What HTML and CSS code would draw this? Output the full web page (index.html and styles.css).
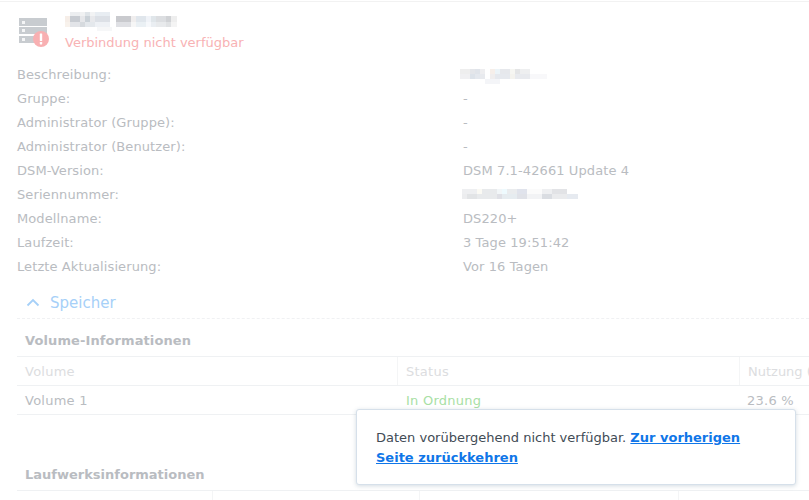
FILE: index.html
```html
<!DOCTYPE html>
<html lang="de">
<head>
    <meta charset="UTF-8">
    <title>Server</title>
    <link rel="stylesheet" href="styles.css">
</head>
<body>
    <div class="page">
        <div class="head">
            <svg class="server-icon" width="32" height="34" viewBox="0 0 32 34">
                <path fill="#c8ccd0" d="M0 0h28v8H0zM0 9h28v7H0zM0 18h28v7H0z"/>
                <rect x="3" y="3" width="3" height="3" fill="#f4f5f6"/>
                <rect x="3" y="11" width="3" height="3" fill="#f4f5f6"/>
                <rect x="3" y="20" width="3" height="3" fill="#f4f5f6"/>
                <circle cx="22" cy="21" r="8" fill="#f8b0b2"/>
                <rect x="20.8" y="15.5" width="2.4" height="7.5" rx="0.6" fill="#fff"/>
                <rect x="20.8" y="24" width="2.4" height="2.4" rx="0.6" fill="#fff"/>
            </svg>
            <div>
                <div class="mosaic name-mosaic"></div>
                <div class="conn-error">Verbindung nicht verfügbar</div>
            </div>
        </div>

        <div class="info-row"><span class="info-label">Beschreibung:</span><span class="mosaic desc-mosaic"></span></div>
        <div class="info-row"><span class="info-label">Gruppe:</span><span>-</span></div>
        <div class="info-row"><span class="info-label">Administrator (Gruppe):</span><span>-</span></div>
        <div class="info-row"><span class="info-label">Administrator (Benutzer):</span><span>-</span></div>
        <div class="info-row"><span class="info-label">DSM-Version:</span><span>DSM 7.1-42661 Update 4</span></div>
        <div class="info-row"><span class="info-label">Seriennummer:</span><span class="mosaic serial-mosaic"></span></div>
        <div class="info-row"><span class="info-label">Modellname:</span><span>DS220+</span></div>
        <div class="info-row"><span class="info-label">Laufzeit:</span><span>3 Tage 19:51:42</span></div>
        <div class="info-row"><span class="info-label">Letzte Aktualisierung:</span><span>Vor 16 Tagen</span></div>

        <div class="section-title">
            <svg width="14" height="9" viewBox="0 0 14 9"><path d="M1.5 7.5 7 2l5.5 5.5" fill="none" stroke="#a6d0f8" stroke-width="1.8"/></svg>
            <span>Speicher</span>
        </div>

        <h3 class="sub-title">Volume-Informationen</h3>
        <div class="table-row table-head volume-cols">
            <div class="cell">Volume</div>
            <div class="cell">Status</div>
            <div class="cell usage-head">Nutzung (</div>
        </div>
        <div class="table-row table-body volume-cols">
            <div class="cell">Volume 1</div>
            <div class="cell status-ok">In Ordnung</div>
            <div class="cell">23.6 %</div>
        </div>

        <h3 class="sub-title drive-title">Laufwerksinformationen</h3>
        <div class="table-row table-head drive-cols">
            <div class="cell"></div>
            <div class="cell"></div>
            <div class="cell"></div>
            <div class="cell"></div>
        </div>
    </div>

    <div class="toast">
        Daten vorübergehend nicht verfügbar. <a href="#">Zur vorherigen Seite zurückkehren</a>
    </div>
</body>
</html>
```

FILE: styles.css
```css
html, body {
    height: 100%;
}
body {
    margin: 0;
    overflow: hidden;
    background-color: #fff;
    color: #b9bcc1;
    font-family: "DejaVu Sans", Verdana, sans-serif;
    font-size: 13px;
}
.page {
    border-top: 1px solid #f2f2f2;
    margin-top: 1px;
    padding: 0 0 0 17px;
    width: 792px;
}
.head {
    display: flex;
    gap: 14px;
    height: 61px;
    padding: 10px 0 0 2px;
    box-sizing: border-box;
}
.server-icon {
    margin-top: 6px;
}
.mosaic {
    display: block;
    background-repeat: no-repeat;
}
.name-mosaic {
    width: 112px;
    height: 19px;
    background-image:
        linear-gradient(90deg, #fff 0 5px, #eceef0 5px 15px, #f0f1f2 15px 20px, #dfe4e8 20px 25px, #f2f3f4 25px 30px, #e8edf2 30px 45px, #fff 45px),
        linear-gradient(90deg, #f6eee8 0 5px, #c8ccd2 5px 15px, #e6e7ea 15px 20px, #cad1d7 20px 25px, #e8e9ec 25px 30px, #dce0e6 30px 45px, #fff 45px 51px, #c9cace 51px 66px, #f0eeee 66px 71px, #e0e6ec 71px 81px, #f0f3f8 81px 86px, #e0e6ea 86px 91px, #dcdee1 91px 101px, #d0d2d5 101px 106px, #eeeeee 106px 111px),
        linear-gradient(90deg, #f8f2ec 0 5px, #e2e4e8 5px 15px, #d6dade 15px 20px, #e4e8ec 20px 30px, #eef1f5 30px 45px, #fff 45px 51px, #dfe0e4 51px 66px, #f6f6f6 66px 71px, #eaf0f4 71px 81px, #f6f8fb 81px 86px, #eaeef2 86px 91px, #e8eaec 91px 101px, #e0e2e4 101px 106px, #f4f4f4 106px 111px),
        linear-gradient(90deg, #fff 0 32px, #f6f7f8 32px 47px, #fff 47px);
    background-size: 100% 4px, 100% 6px, 100% 5px, 100% 4px;
    background-position: 0 0, 0 4px, 0 10px, 0 15px;
}
.conn-error {
    margin-top: 4px;
    color: #f8b2b4;
}
.info-row {
    display: flex;
    height: 24px;
    line-height: 24px;
    letter-spacing: 0.1px;
}
.info-label {
    width: 446px;
}
.desc-mosaic {
    width: 87px;
    height: 15px;
    margin: 6px 0 0 -3px;
    background-image:
        linear-gradient(90deg, #eeeeee 0 10px, #e4e6ea 10px 15px, #e0e4ea 15px 20px, #eeeef0 20px 25px, #fff 25px 30px, #f6efea 30px 35px, #ecf4f8 35px 40px, #e6e8ec 40px 50px, #f6f6f2 50px 55px, #e4e5e6 55px 60px, #eeeff0 60px 70px, #fff 70px),
        linear-gradient(90deg, #f0f0f2 0 10px, #dde3ea 10px 15px, #e4e8ee 15px 20px, #e8eaee 20px 25px, #fff 25px 30px, #f0eeee 30px 35px, #e6e9ee 35px 50px, #f4f3ee 50px 55px, #e8eaee 55px 70px, #f8f8fa 70px 85px),
        linear-gradient(90deg, #fff 0 25px, #f4f5f8 25px 40px, #fff 40px);
    background-size: 100% 5px;
    background-position: 0 0, 0 5px, 0 10px;
}
.serial-mosaic {
    width: 116px;
    height: 10px;
    margin: 6px 0 0 -1px;
    background-image:
        linear-gradient(90deg, #eeeff1 0 15px, #fbfaf4 15px 20px, #e8eaec 20px 35px, #f2f6f8 35px 40px, #eefafe 40px 45px, #eaecee 45px 55px, #e0e3ec 55px 65px, #fbfbfb 65px 80px, #eeeff1 80px 90px, #e2e3e6 90px 105px, #fff 105px),
        linear-gradient(90deg, #ecedef 0 5px, #e2e4e6 5px 15px, #e8eaec 15px 35px, #dfe0e6 35px 40px, #e6ecf0 40px 55px, #e0e2e8 55px 65px, #f2f3f5 65px 80px, #dadde2 80px 90px, #eaebed 90px 105px, #e6eaf0 105px 115px);
    background-size: 100% 5px;
    background-position: 0 0, 0 5px;
}
.section-title {
    display: flex;
    align-items: center;
    gap: 10px;
    height: 31px;
    margin-top: 8px;
    padding-left: 9px;
    border-bottom: 1px dashed #f0f1f3;
    color: #a6d0f8;
    font-size: 15px;
}
.sub-title {
    margin: 0;
    height: 37px;
    line-height: 44px;
    padding-left: 8px;
    font-size: 13px;
    letter-spacing: 0.1px;
    color: #b9bcc1;
}
.drive-title {
    margin-top: 38px;
    letter-spacing: 0;
}
.table-row {
    display: grid;
    box-sizing: border-box;
    height: 29px;
    line-height: 30px;
    letter-spacing: 0.25px;
    border-top: 1px solid #eff1f3;
}
.table-body {
    height: 30px;
    border-bottom: 1px solid #eff1f3;
}
.volume-cols {
    grid-template-columns: 380px 342px 1fr;
}
.drive-cols {
    grid-template-columns: 195px 207px 259px 1fr;
}
.cell {
    padding-left: 8px;
    white-space: nowrap;
    overflow: hidden;
}
.table-head .cell {
    color: #dcdde0;
}
.table-head .cell + .cell {
    border-left: 1px solid #f4f5f6;
}
.table-head .usage-head {
    letter-spacing: 0;
}
.status-ok {
    padding-left: 9px;
    color: #a8e0a4;
}
.toast {
    position: absolute;
    left: 356px;
    top: 409px;
    width: 440px;
    height: 76px;
    box-sizing: border-box;
    padding: 18px 19px;
    background-color: #fff;
    border: 1px solid #d6e0ea;
    border-radius: 3px;
    box-shadow: 0 1px 4px rgba(80, 110, 140, 0.25);
    color: #414b55;
    line-height: 20px;
}
.toast a {
    color: #0f76e8;
    font-weight: bold;
}
```
